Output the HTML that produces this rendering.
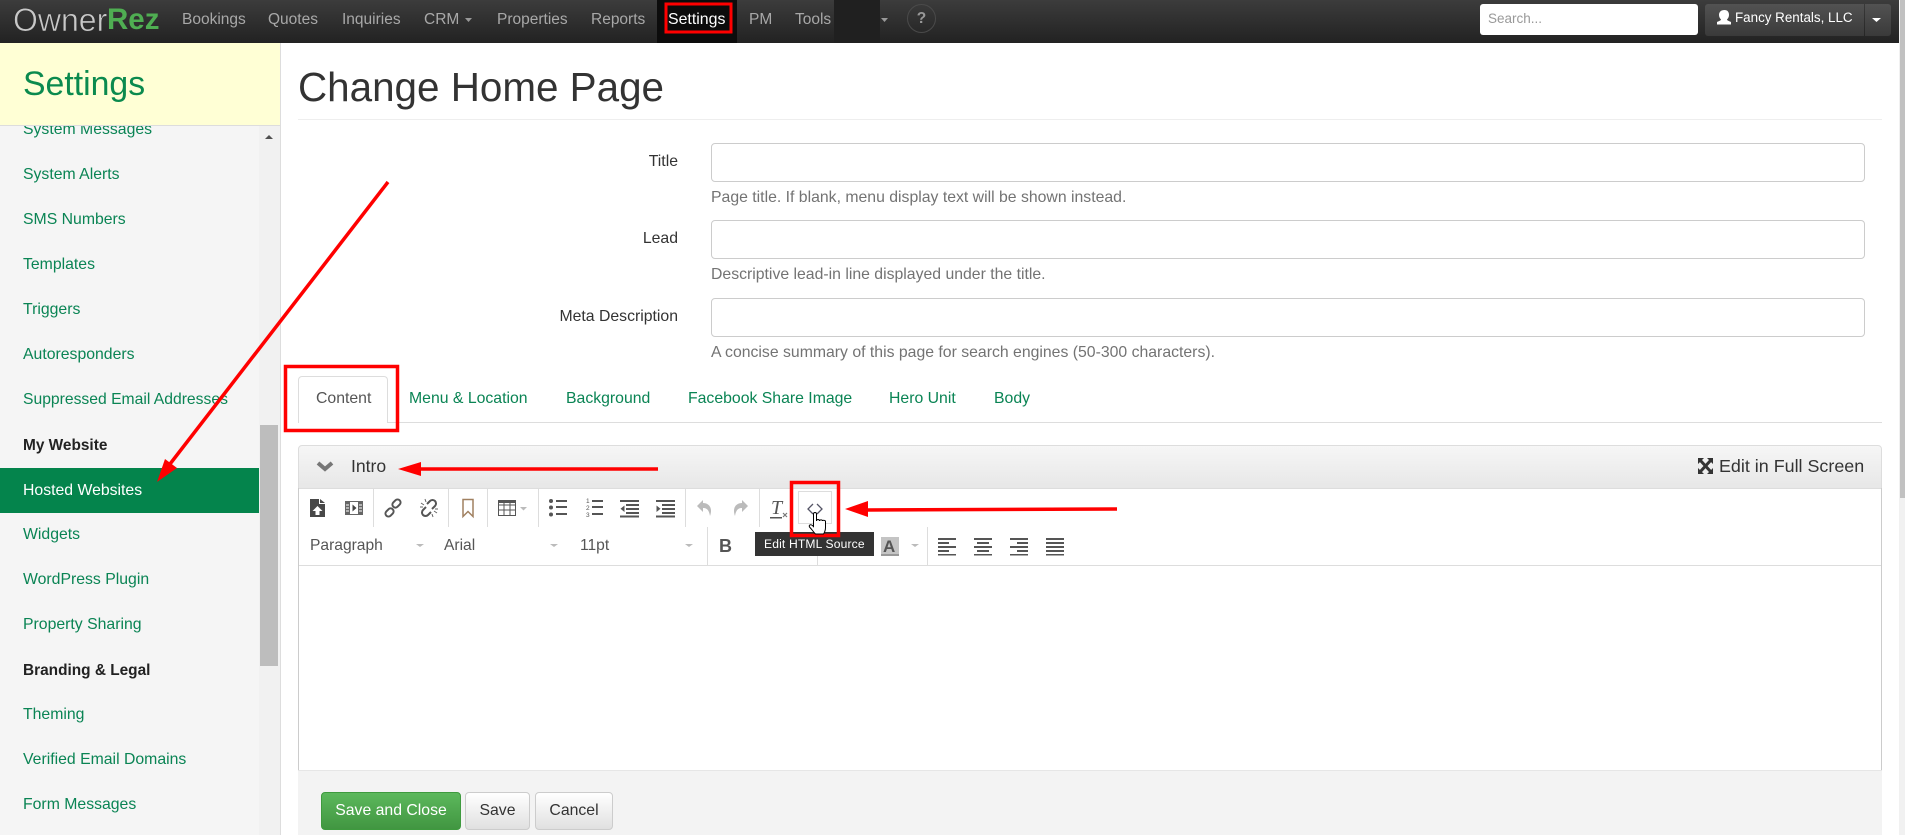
<!DOCTYPE html>
<html>
<head>
<meta charset="utf-8">
<title>Change Home Page</title>
<style>
html,body{margin:0;padding:0;width:1905px;height:835px;overflow:hidden;background:#fff;font-family:"Liberation Sans",Arial,sans-serif;font-size:15.8px;color:#333}
.a{position:absolute}
.t{position:absolute;white-space:nowrap;line-height:20px}
#nav{left:0;top:0;width:1899px;height:43px;background:linear-gradient(#3c3c3c,#222);border-bottom:0;font-size:15.5px}
#nav .t{color:#a8a8a8;top:10px}
.side .t{color:#0a8454;left:23px}
.side b.t{color:#222}
.inp{position:absolute;left:711px;width:1152px;height:37px;border:1px solid #ccc;border-radius:4px;background:#fff}
.lab{position:absolute;right:1227px;white-space:nowrap;line-height:20px;color:#333}
.hlp{position:absolute;left:711px;white-space:nowrap;line-height:20px;color:#737373}
.tab{position:absolute;top:389px;white-space:nowrap;line-height:20px;color:#0a8454}
.sep{position:absolute;width:1px;background:#ddd}
.ed{position:absolute;top:536px;white-space:nowrap;line-height:20px;color:#555;font-size:15.6px}
.btn{position:absolute;top:792px;height:36px;border:1px solid #ccc;border-radius:4px;background:linear-gradient(#fff,#e0e0e0);text-align:center;line-height:36px;color:#333}
</style>
</head>
<body>

<!-- sidebar -->
<div class="a side" style="left:0;top:125px;width:280px;height:710px;background:#f5f5f5;overflow:hidden">
  <div class="a" style="left:259px;top:0;width:21px;height:710px;background:#f1f1f1"></div>
  <div class="a" style="left:260px;top:300px;width:18px;height:241px;background:#bdbdbd"></div>
  <div class="a" style="left:0;top:343px;width:259px;height:45px;background:#04844c"></div>
  <span class="t" style="top:-5px">System Messages</span>
  <span class="t" style="top:40px">System Alerts</span>
  <span class="t" style="top:85px">SMS Numbers</span>
  <span class="t" style="top:130px">Templates</span>
  <span class="t" style="top:175px">Triggers</span>
  <span class="t" style="top:220px">Autoresponders</span>
  <span class="t" style="top:265px;font-size:15.7px">Suppressed Email Addresses</span>
  <b class="t" style="top:311px;font-size:15.4px">My Website</b>
  <span class="t" style="top:356px;color:#fff">Hosted Websites</span>
  <span class="t" style="top:400px">Widgets</span>
  <span class="t" style="top:445px">WordPress Plugin</span>
  <span class="t" style="top:490px">Property Sharing</span>
  <b class="t" style="top:536px;font-size:15.4px">Branding &amp; Legal</b>
  <span class="t" style="top:580px">Theming</span>
  <span class="t" style="top:625px">Verified Email Domains</span>
  <span class="t" style="top:670px">Form Messages</span>
</div>
<div class="a" style="left:0;top:43px;width:280px;height:82px;background:#ffffd5;border-bottom:1px solid #ddd"></div>
<div class="t" style="left:23px;top:64px;font-size:33.8px;line-height:40px;color:#0b8a4e">Settings</div>
<div class="a" style="left:280px;top:43px;width:1px;height:792px;background:#ddd"></div>

<!-- navbar -->
<div class="a" id="nav">
  <span class="t" style="left:13px;top:2px;font-size:32px;line-height:36px;color:#c8c8c8;-webkit-text-stroke:.6px #2e2e2e">Owner</span>
  <b class="t" style="left:107px;top:2px;font-size:29.5px;line-height:36px;color:#4fae52">Rez</b>
  <span class="t" style="left:182px">Bookings</span>
  <span class="t" style="left:268px">Quotes</span>
  <span class="t" style="left:342px">Inquiries</span>
  <span class="t" style="left:424px">CRM</span>
  <span class="t" style="left:497px">Properties</span>
  <span class="t" style="left:591px">Reports</span>
  <div class="a" style="left:657px;top:0;width:80px;height:43px;background:#0c0c0c"></div>
  <span class="t" style="left:668px;color:#fff;font-size:15.9px">Settings</span>
  <span class="t" style="left:749px">PM</span>
  <span class="t" style="left:795px">Tools</span>
  <div class="a" style="left:834px;top:0;width:46px;height:43px;background:#202020"></div>
  <div class="a" style="left:907px;top:4px;width:27px;height:27px;border:1px solid #4a4a4a;border-radius:50%;text-align:center;line-height:27px;color:#999;font-weight:bold;font-size:15.5px">?</div>
  <div class="a" style="left:1480px;top:4px;width:218px;height:31px;background:#fff;border-radius:3px"></div>
  <span class="t" style="left:1488px;top:9px;font-size:13.5px;color:#999">Search...</span>
  <div class="a" style="left:1705px;top:4px;width:159px;height:32px;background:linear-gradient(#525252,#3a3a3a);border-radius:3px 0 0 3px"></div>
  <div class="a" style="left:1865px;top:4px;width:26px;height:32px;background:linear-gradient(#525252,#3a3a3a);border-radius:0 3px 3px 0"></div>
  <span class="t" style="left:1735px;top:8px;font-size:13.4px;color:#fff">Fancy Rentals, LLC</span>
</div>

<!-- page scrollbar -->
<div class="a" style="left:1899px;top:0;width:6px;height:835px;background:#f1f1f1"></div>
<div class="a" style="left:1900px;top:0;width:5px;height:498px;background:#c1c1c1"></div>

<!-- title -->
<div class="t" style="left:298px;top:65px;font-size:40.4px;line-height:44px;color:#333">Change Home Page</div>
<div class="a" style="left:298px;top:119px;width:1584px;height:1px;background:#eee"></div>

<!-- form -->
<div class="lab" style="top:152px">Title</div>
<div class="inp" style="top:143px"></div>
<div class="hlp" style="top:188px">Page title. If blank, menu display text will be shown instead.</div>
<div class="lab" style="top:229px">Lead</div>
<div class="inp" style="top:220px"></div>
<div class="hlp" style="top:265px">Descriptive lead-in line displayed under the title.</div>
<div class="lab" style="top:307px">Meta Description</div>
<div class="inp" style="top:298px"></div>
<div class="hlp" style="top:343px">A concise summary of this page for search engines (50-300 characters).</div>

<!-- tabs -->
<div class="a" style="left:298px;top:422px;width:1584px;height:1px;background:#ddd"></div>
<div class="a" style="left:298px;top:376px;width:90px;height:47px;background:#fff;border:1px solid #ddd;border-bottom:0;border-radius:4px 4px 0 0;box-sizing:border-box"></div>
<div class="tab" style="left:316px;color:#555">Content</div>
<div class="tab" style="left:409px">Menu &amp; Location</div>
<div class="tab" style="left:566px">Background</div>
<div class="tab" style="left:688px">Facebook Share Image</div>
<div class="tab" style="left:889px">Hero Unit</div>
<div class="tab" style="left:994px">Body</div>

<!-- panel -->
<div class="a" style="left:298px;top:445px;width:1584px;height:44px;box-sizing:border-box;background:linear-gradient(#f6f6f6,#e7e7e7);border:1px solid #ddd;border-radius:4px 4px 0 0"></div>
<div class="t" style="left:351px;top:456px;font-size:17.6px;color:#333">Intro</div>
<div class="t" style="left:1719px;top:456px;font-size:17.9px;color:#333">Edit in Full Screen</div>
<div class="a" style="left:298px;top:488px;width:1px;height:282px;background:#ccc"></div>
<div class="a" style="left:1881px;top:488px;width:1px;height:282px;background:#ccc"></div>
<div class="a" style="left:299px;top:565px;width:1582px;height:1px;background:#ddd"></div>

<!-- toolbar separators -->
<div class="sep" style="left:373px;top:489px;height:38px"></div>
<div class="sep" style="left:448px;top:489px;height:38px"></div>
<div class="sep" style="left:487px;top:489px;height:38px"></div>
<div class="sep" style="left:538px;top:489px;height:38px"></div>
<div class="sep" style="left:685px;top:489px;height:38px"></div>
<div class="sep" style="left:759px;top:489px;height:38px"></div>
<div class="sep" style="left:707px;top:527px;height:38px"></div>
<div class="sep" style="left:817px;top:527px;height:38px"></div>
<div class="sep" style="left:927px;top:527px;height:38px"></div>

<div class="ed" style="left:310px">Paragraph</div>
<div class="ed" style="left:444px">Arial</div>
<div class="ed" style="left:580px">11pt</div>
<b class="ed" style="left:719px;font-size:18px">B</b>

<!-- footer -->
<div class="a" style="left:298px;top:770px;width:1584px;height:65px;background:#f3f3f3;border-top:1px solid #e6e6e6;box-sizing:border-box"></div>
<div class="btn" style="left:321px;width:138px;background:linear-gradient(#5cb85c,#419641);border-color:#3e9a3e;color:#fff">Save and Close</div>
<div class="btn" style="left:465px;width:63px">Save</div>
<div class="btn" style="left:535px;width:76px">Cancel</div>

<!-- icons -->
<svg class="a" style="left:0;top:0" width="1905" height="835" viewBox="0 0 1905 835">
  <!-- nav carets -->
  <g fill="#999">
    <path d="M465 18h7l-3.500 4z"/>
    <path d="M881 18h7l-3.500 4z"/>
  </g>
  <path d="M1872 18h9l-4.500 4z" fill="#fff"/>
  <path d="M1724.500 10c3 0 4.500 2 4.500 5 0 2-1 3.500-2 4.500 0 1 2 1.500 4 2.500v2.500h-14v-2.500c2-1 4-1.500 4-2.500-1-1-2-2.500-2-4.500 0-3 2-5 5.500-5z" fill="#fff"/>
  <!-- sidebar up arrow -->
  <path d="M265 139l4-4 4 4z" fill="#505050"/>
  <!-- chevron -->
  <path d="M318 463l7 6 7-6" fill="none" stroke="#777" stroke-width="4"/>
  <!-- full screen -->
  <g fill="#333">
    <path d="M1698 458h6l-6 6zM1713 458h-6l6 6zM1698 474h6l-6-6zM1713 474h-6l6-6z"/>
    <path d="M1700 460l11 12M1711 460l-11 12" stroke="#333" stroke-width="3"/>
  </g>
  <!-- file upload -->
  <path d="M310 499h9v5h6v13h-15z" fill="#484848"/>
  <path d="M320 499l5 4h-5z" fill="#484848"/>
  <path d="M317.500 506l5 5h-3v4h-4v-4h-3z" fill="#fff"/>
  <!-- film -->
  <g fill="#666">
    <path d="M345 501h18v14h-18zM350 502v12h8v-12z" fill-rule="evenodd"/>
    <path d="M352.500 504.500l4 3.500-4 3.500z" fill="#444"/>
  </g>
  <path d="M346 505h3M346 508h3M346 511h3M359 505h3M359 508h3M359 511h3" stroke="#fff" stroke-width="1"/>
  <!-- link -->
  <g fill="none" stroke="#555" stroke-width="2">
    <rect x="-8" y="-3" width="9" height="6" rx="3" transform="translate(392 510) rotate(-45)"/>
    <rect x="-1" y="-3" width="9" height="6" rx="3" transform="translate(394 506) rotate(-45)"/>
  </g>
  <!-- unlink -->
  <g fill="none" stroke="#555" stroke-width="2">
    <path d="M426 507l-3 3a3.500 3.500 0 0 0 5 5l3-3"/>
    <path d="M432 509l3-3a3.500 3.500 0 0 0-5-5l-3 3"/>
  </g>
  <path d="M421 503l3 2M425 499l1 3M437 513l-3-2M433 517l-1-3M420 507h3M438 509h-3" stroke="#666" stroke-width="1"/>
  <!-- bookmark -->
  <path d="M463 499.500h10v17l-5-5-5 5z" fill="none" stroke="#a08060" stroke-width="1.500"/>
  <!-- table -->
  <path d="M498.500 500.500h17v15h-17zM498 505h18M498 510h18M504 501v14M510 501v14" fill="none" stroke="#555" stroke-width="1"/>
  <path d="M498 500h18v3h-18z" fill="#555"/>
  <path d="M520 507h7l-3.500 3.500z" fill="#bbb"/>
  <!-- bullets -->
  <g fill="#555">
    <circle cx="551" cy="501" r="2"/><circle cx="551" cy="507.500" r="2"/><circle cx="551" cy="514.500" r="2"/>
    <path d="M556 500h11v2h-11zM556 506h11v2h-11zM556 513h11v2h-11z"/>
    <path d="M592 500h11v2h-11zM592 506h11v2h-11zM592 513h11v2h-11z"/>
  </g>
  <g font-family="Liberation Sans,sans-serif" font-size="6.500" fill="#555">
    <text x="586" y="503">1</text><text x="586" y="510">2</text><text x="586" y="517">3</text>
  </g>
  <!-- outdent / indent -->
  <g fill="#555">
    <path d="M620 500h19v2h-19zM626 504h13v2h-13zM626 508h13v2h-13zM626 512h13v2h-13zM620 515.500h19v2h-19z"/>
    <path d="M624.500 505.500v6.500l-4-3.200z"/>
    <path d="M656 500h19v2h-19zM662 504h13v2h-13zM662 508h13v2h-13zM662 512h13v2h-13zM656 515.500h19v2h-19z"/>
    <path d="M656.500 505.500v6.500l4-3.200z"/>
  </g>
  <!-- undo redo -->
  <path d="M703 500l-6 6 6 6v-4c4 0 6 2 7 8 3-8-1-13-7-13z" fill="#bbb"/>
  <path d="M742 500l6 6-6 6v-4c-4 0-6 2-7 8-3-8 1-13 7-13z" fill="#bbb"/>
  <!-- clear format -->
  <text x="771" y="514" font-family="Liberation Serif,serif" font-style="italic" font-size="20" fill="#555">T</text>
  <path d="M770 517h12v1.500h-12z" fill="#555"/>
  <path d="M783 513l4 4M787 513l-4 4" stroke="#777" stroke-width="1.200"/>
  <!-- code button -->
  <rect x="798.500" y="491.500" width="33" height="32" fill="none" stroke="#ddd"/>
  <path d="M813 504l-5 5 5 5M817 504l5 5-5 5" fill="none" stroke="#556" stroke-width="1.300"/>
  <!-- row 2 carets -->
  <g fill="#bbb">
    <path d="M416 544h8l-4 3zM550 544h8l-4 3zM685 544h8l-4 3zM911 544h8l-4 3z"/>
  </g>
  <!-- color A -->
  <rect x="881" y="537" width="18" height="19" fill="#c4c4c4"/>
  <text x="883" y="552" font-family="Liberation Sans,sans-serif" font-weight="bold" font-size="17" fill="#555">A</text>
  <path d="M881 554h18v2h-18z" fill="#999"/>
  <path d="M827 554h16v2h-16z" fill="#333"/>
  <!-- align -->
  <g fill="#555">
    <path d="M938 538h18v2h-18zM938 542h11v2h-11zM938 546h18v2h-18zM938 550h11v2h-11zM938 554h18v1.500h-18z"/>
    <path d="M974 538h18v2h-18zM977 542h12v2h-12zM974 546h18v2h-18zM977 550h12v2h-12zM974 554h18v1.500h-18z"/>
    <path d="M1010 538h18v2h-18zM1017 542h11v2h-11zM1010 546h18v2h-18zM1017 550h11v2h-11zM1010 554h18v1.500h-18z"/>
    <path d="M1046 538h18v2h-18zM1046 542h18v2h-18zM1046 546h18v2h-18zM1046 550h18v2h-18zM1046 554h18v1.500h-18z"/>
  </g>
</svg>

<!-- tooltip -->
<div class="a" style="left:755px;top:532px;width:119px;height:24px;background:#333"></div>
<div class="t" style="left:764px;top:534px;font-size:12.1px;color:#fff;letter-spacing:.15px">Edit HTML Source</div>

<!-- annotations -->
<svg class="a" style="left:0;top:0" width="1905" height="835" viewBox="0 0 1905 835">
  <g fill="none" stroke="#f00">
    <rect x="666" y="4" width="65" height="28" stroke-width="3"/>
    <rect x="285.500" y="366.500" width="112" height="64" stroke-width="3.500"/>
    <rect x="791.500" y="482.500" width="47" height="53" stroke-width="3.500"/>
  </g>
  <g stroke="#f00" fill="none">
    <path d="M388 182L170 464" stroke-width="3.500"/>
    <path d="M420 469L658 469" stroke-width="3.500"/>
    <path d="M866 510L1117 509" stroke-width="3.500"/>
  </g>
  <g fill="#f00">
    <path d="M157 482l8-23 12 9z"/>
    <path d="M398 469l23-7v14z"/>
    <path d="M845 509l23-8v16z"/>
  </g>
  <!-- hand cursor -->
  <path d="M813.500 514c0-2 3-2 3 0v7c0-2 3-2 3 0 0-1.500 3-1.500 3 0 0-1 3-1 3 .5v6c0 3-1 5-2 6.500h-8c-2-2-4-5-6-7-1-2 1-3 3-1.500l1 1z" fill="#fff" stroke="#000" stroke-width="1"/>
</svg>

</body>
</html>
